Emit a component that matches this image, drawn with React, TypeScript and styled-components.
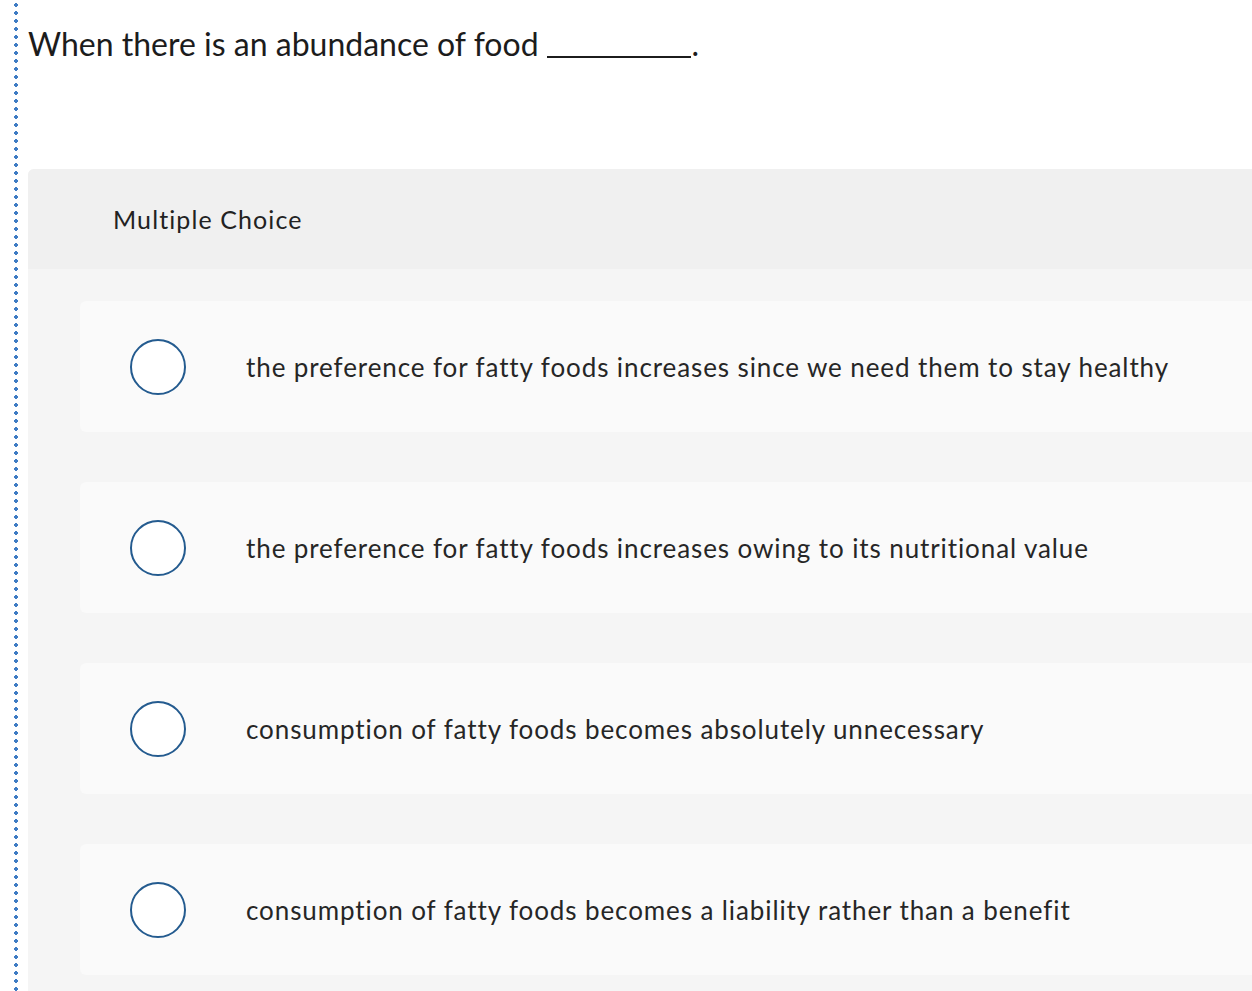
import * as React from 'react';
import styled, { createGlobalStyle } from 'styled-components';

const GlobalStyle = createGlobalStyle`
  html, body {
    margin: 0;
    padding: 0;
    background: #ffffff;
    overflow: hidden;
  }
  body {
    font-family: Lato, "Open Sans", Arial, sans-serif;
    font-variant-ligatures: none;
    color: #1f1f1f;
  }
`;

const options = [
  'the preference for fatty foods increases since we need them to stay healthy',
  'the preference for fatty foods increases owing to its nutritional value',
  'consumption of fatty foods becomes absolutely unnecessary',
  'consumption of fatty foods becomes a liability rather than a benefit',
];

const Page = styled.div`
  min-height: 991px;
  padding-left: 28px;
  background-image: radial-gradient(circle, #3f7cc4 1.6px, transparent 2px);
  background-size: 8px 8px;
  background-position: 12px 1px;
  background-repeat: repeat-y;
`;

const Question = styled.h1`
  margin: 0;
  padding-top: 25px;
  font-size: 32px;
  font-weight: 400;
  line-height: 38px;
  color: #1c1c1c;
`;

const Blank = styled.span`
  display: inline-block;
  width: 144px;
  height: 2px;
  margin-left: 8px;
  margin-right: 1px;
  background: #1c1c1c;
  vertical-align: -2px;
`;

const Panel = styled.section`
  margin-top: 106px;
  width: 1400px;
  background: #f5f5f5;
  border-top-left-radius: 6px;
  overflow: hidden;
`;

const PanelHeader = styled.div`
  height: 100px;
  display: flex;
  align-items: center;
  padding-left: 85px;
  background: #f0f0f0;
  font-size: 25px;
  letter-spacing: 1.1px;
  color: #222;
`;

const ChoiceList = styled.div`
  display: flex;
  flex-direction: column;
  gap: 50px;
  padding: 32px 0 40px 52px;
`;

const Choice = styled.label`
  height: 131px;
  display: flex;
  align-items: center;
  padding-left: 50px;
  background: #fafafa;
  border-radius: 6px 0 0 6px;
  cursor: pointer;
`;

const Radio = styled.span`
  flex: none;
  width: 52px;
  height: 52px;
  border: 2px solid #245b8f;
  border-radius: 50%;
  background: #fff;
`;

const ChoiceText = styled.span`
  margin-left: 60px;
  font-size: 26px;
  letter-spacing: 0.9px;
  color: #262626;
`;

const App: React.FC = () => {
  return (
    <>
      <GlobalStyle />
      <Page>
        <Question>
          When there is an abundance of food<Blank />.
        </Question>
        <Panel>
          <PanelHeader>Multiple Choice</PanelHeader>
          <ChoiceList>
            {options.map((text) => (
              <Choice key={text}>
                <Radio />
                <ChoiceText>{text}</ChoiceText>
              </Choice>
            ))}
          </ChoiceList>
        </Panel>
      </Page>
    </>
  );
};

export default App;
